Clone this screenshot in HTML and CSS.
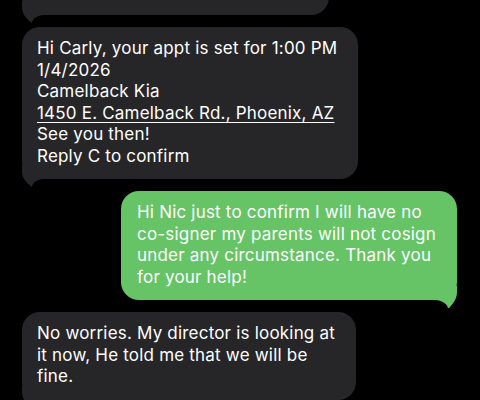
FILE: index.html
```html
<!DOCTYPE html>
<html lang="en">
<head>
    <meta charset="UTF-8">
    <meta name="viewport" content="width=device-width, initial-scale=1.0">
    <title>Messages</title>
    <link rel="stylesheet" href="styles.css">
</head>
<body>
    <div class="thread">
        <div class="bubble received">
            We look forward to seeing you at<br>
            Kia on Camelback.
        </div>
        <div class="bubble received">
            Hi Carly, your appt is set for 1:00 PM<br>
            1/4/2026<br>
            Camelback Kia<br>
            <span class="link">1450 E. Camelback Rd., Phoenix, AZ</span><br>
            See you then!<br>
            Reply C to confirm
        </div>
        <div class="bubble sent">
            Hi Nic just to confirm I will have no<br>
            co-signer my parents will not cosign<br>
            under any circumstance. Thank you<br>
            for your help!
        </div>
        <div class="bubble received">
            No worries. My director is looking at<br>
            it now, He told me that we will be<br>
            fine.
        </div>
    </div>
</body>
</html>
```

FILE: styles.css
```css
body {
    margin: 0;
    background: #000;
    font-family: Inter, "Liberation Sans", sans-serif;
    overflow: hidden;
}

.thread {
    display: flex;
    flex-direction: column;
    gap: 12px;
    padding: 0 23px 0 22px;
    margin-top: -51px;
}

.bubble {
    position: relative;
    width: fit-content;
    padding: 11px 21px 12px 15px;
    border-radius: 18px;
    font-size: 17px;
    line-height: 21.5px;
    letter-spacing: 0.2px;
    color: #fff;
}

.bubble::after {
    content: "";
    position: absolute;
    bottom: -8px;
    width: 24px;
    height: 22px;
    background: inherit;
}

.received {
    background: #262629;
}

.received::after {
    left: 0;
    clip-path: path("M0,0 L0,6 C0,12 3,17 10,22 C10,19 13,15 21,14 L24,14 L24,0 Z");
}

.sent {
    align-self: flex-end;
    background: #66c466;
    padding-left: 16px;
}

.sent::after {
    right: 0;
    clip-path: path("M24,0 L24,6 C24,12 21,17 15,23 C15,19 11,15 3,14 L0,14 L0,0 Z");
}

.link {
    text-decoration: underline;
    text-decoration-thickness: 1px;
    text-underline-offset: 3px;
}
```
